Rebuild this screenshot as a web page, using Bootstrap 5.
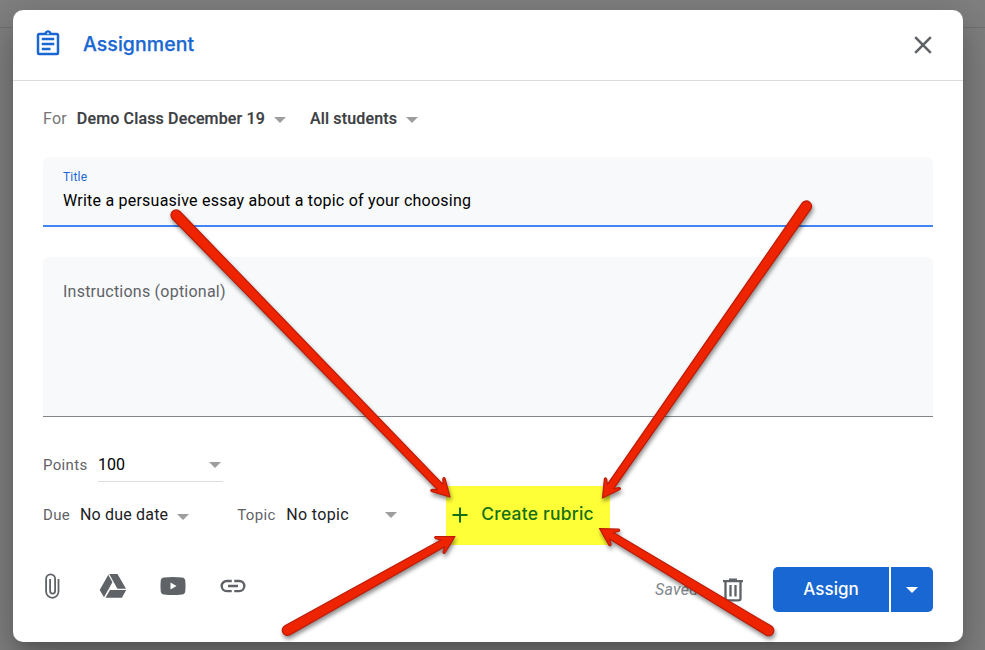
<!DOCTYPE html>
<html lang="en">
<head>
<meta charset="utf-8">
<meta name="viewport" content="width=device-width, initial-scale=1">
<title>Assignment</title>
<link href="https://cdn.jsdelivr.net/npm/bootstrap@5.3.0/dist/css/bootstrap.min.css" rel="stylesheet">
<style>
body{background:#808080;font-family:Roboto,"Liberation Sans",sans-serif;font-size:16px;line-height:20px;color:#202124;height:650px}
.topline{height:28px;border-bottom:1px solid #727272}
.dialog{width:950px;height:632px;margin:-18px 0 0 13px;border-radius:10px;box-shadow:0 11px 15px -7px rgba(0,0,0,.2),0 24px 38px 3px rgba(0,0,0,.14),0 9px 46px 8px rgba(0,0,0,.12)}
.dialog-head{height:71px;border-bottom:1px solid #dadce0;padding:0 30px 2px 20px}
.dialog-title{font-family:Inter,sans-serif;font-size:19.5px;font-weight:500;color:#1967d2;margin:0 0 0 20px;line-height:28px;letter-spacing:.05px;-webkit-text-stroke:.25px #1967d2}
.dialog-main{padding:0 30px}
.for-row{height:76px;color:#757575}
.for-row strong{font-weight:500;color:#3c4043;letter-spacing:.15px;-webkit-text-stroke:.2px #3c4043}
.caret{width:0;height:0;border:6px solid transparent;border-top-color:#9e9e9e;border-bottom:0;flex:none}
.field{background:#f8f9fa;border-radius:6px 6px 0 0;padding-left:20px;color:#000;letter-spacing:.23px}
.field-title{height:70px;border-bottom:2px solid #4285f4;padding-top:10px}
.field-title label{font-size:12px;color:#1967d2;display:block;line-height:20px;letter-spacing:.2px}
.field-title span{display:block;line-height:20px;margin-top:4px}
.field-text{height:160px;margin-top:30px;border-bottom:1px solid #80868b;padding-top:25px;color:#5f6368}
.points-row{height:48px;margin-top:24px}
.muted-label{font-size:15px;color:#5f6368;letter-spacing:.35px}
.points-input{width:125px;height:41px;border-bottom:1px solid #dadce0;color:#000;padding:7px 2px 0 0}
.options-row{height:60px;margin-top:-4px}
.rubric{width:164px;height:59px;background:#ffff38;color:#137013;font-family:Inter,sans-serif;font-size:17.4px;font-weight:500}
.tools-row{height:46px;margin-top:21px;color:#5f6368}
.saved{font-style:italic;color:#80868b}
.btn-assign,.btn-more{background:#1967d2;color:#fff;height:45px;border:0;border-radius:5px 0 0 5px;font-family:Inter,sans-serif;font-size:17px;font-weight:500;padding:0}
.btn-assign{width:116px;padding-top:2px}
.btn-more{width:42px;border-radius:0 5px 5px 0;margin-left:2px}
.btn-more .caret{border-top-color:#fff;margin-top:1px}
.t-for{letter-spacing:.2px}
.t-class{margin-left:10px}.c-class{margin-left:9px;margin-top:2px}.t-all{margin-left:24px}.c-all{margin-left:9px;margin-top:2px}
.t-points{width:55px;line-height:48px}.t-due{width:37px}.t-nodue{letter-spacing:.18px}.c-due{margin-left:9px;margin-top:3px}.t-topic{margin-left:48px;width:49px}.t-notopic{width:99px;letter-spacing:.35px}
.rubric{margin-left:49px;padding-left:6px;letter-spacing:.25px}.plus{margin-right:13px}.t-rubric{padding-bottom:2px}
.i-clip,.i-drive,.i-tube,.i-link{margin-bottom:6px}
.i-drive{margin-left:38px}.i-tube{margin-left:33px}.i-link{margin-left:32px}
.t-saved{margin-left:407px;width:67px;letter-spacing:.25px;padding-top:2px}.i-trash{margin-top:1px}.btn-assign{margin-left:29px}
.arrows{left:0;top:0;pointer-events:none;filter:drop-shadow(1px 3px 2px rgba(0,0,0,.45))}
</style>
<script src="https://cdn.jsdelivr.net/npm/bootstrap@5.3.0/dist/js/bootstrap.bundle.min.js"></script>
</head>
<body class="overflow-hidden position-relative">
<div class="topline"></div>
<main class="dialog bg-white">
  <header class="dialog-head d-flex align-items-center">
    <svg width="30" height="30" viewBox="0 0 24 24" fill="#1967d2"><path d="M7 15h7v2H7zm0-4h10v2H7zm0-4h10v2H7zm12-4h-4.180C14.400 1.840 13.300 1 12 1s-2.400.840-2.820 2H5a2 2 0 0 0-2 2v14a2 2 0 0 0 2 2h14a2 2 0 0 0 2-2V5a2 2 0 0 0-2-2zm-7-.25a.75.75 0 1 1 0 1.500.75.75 0 0 1 0-1.500zM19 19H5V5h14z"/></svg>
    <h1 class="dialog-title">Assignment</h1>
    <svg class="ms-auto" width="20" height="20" viewBox="0 0 20 20" fill="none" stroke="#5f6368" stroke-width="2.600"><path d="M2.200 3.200l15.600 15.600M17.800 3.200L2.200 18.800"/></svg>
  </header>
  <div class="dialog-main">
    <div class="for-row d-flex align-items-center">
      <span class="t-for">For</span><strong class="t-class">Demo Class December 19</strong><i class="caret c-class"></i>
      <strong class="t-all">All students</strong><i class="caret c-all"></i>
    </div>
    <div class="field field-title"><label>Title</label><span>Write a persuasive essay about a topic of your choosing</span></div>
    <div class="field field-text">Instructions (optional)</div>
    <div class="points-row d-flex align-items-start">
      <span class="muted-label t-points">Points</span>
      <div class="points-input d-flex align-items-center justify-content-between"><span>100</span><i class="caret"></i></div>
    </div>
    <div class="options-row d-flex align-items-center">
      <span class="muted-label t-due">Due</span><span class="t-nodue">No due date</span><i class="caret c-due"></i>
      <span class="muted-label t-topic">Topic</span><span class="t-notopic">No topic</span><i class="caret c-topic"></i>
      <div class="rubric d-flex align-items-center">
        <svg class="plus" width="16" height="16" viewBox="0 0 16 16" stroke="#137013" stroke-width="2"><path d="M8 .5v15M.5 8h15"/></svg>
        <span class="t-rubric">Create rubric</span>
      </div>
    </div>
    <div class="tools-row d-flex align-items-center">
      <svg class="i-clip" width="18" height="28" viewBox="0 0 18 28" fill="none" stroke="#5f6368" stroke-width="1.800"><path d="M15.500 7v12.600a6.200 6.200 0 0 1-12.400 0V6.800a4.500 4.500 0 0 1 9 0v12.300a2.500 2.500 0 0 1-5 0V7"/></svg>
      <svg class="i-drive" width="28" height="26" viewBox="0 0 28 26" fill="#5f6368"><path d="M10.200 1h8.300l8.500 14.800h-8.600zM9.300 1.800L13.400 9.200 5 24.200.7 17zM11 17h16.200l-4.300 7.800H6.500z"/></svg>
      <svg class="i-tube" width="26" height="20" viewBox="0 0 26 20"><path fill="#5f6368" d="M4 1.500Q13 .5 22 1.500 25 1.700 25.300 5q.5 5 0 10-.3 3.300-3.300 3.500-9 1-18 0Q1 18.300.7 15q-.5-5 0-10Q1 1.700 4 1.500z"/><path fill="#fff" d="M10.500 6.500v7l6-3.500z"/></svg>
      <svg class="i-link" width="30" height="30" viewBox="0 0 24 24" fill="#5f6368"><path d="M3.900 12c0-1.710 1.390-3.100 3.100-3.100h4V7H7a5 5 0 0 0 0 10h4v-1.900H7A3.100 3.100 0 0 1 3.900 12zM8 13h8v-2H8zm9-6h-4v1.900h4a3.100 3.100 0 0 1 0 6.200h-4V17h4a5 5 0 0 0 0-10z"/></svg>
      <span class="saved t-saved">Saved</span>
      <svg class="i-trash" width="22" height="24" viewBox="0 0 22 24" fill="none" stroke="#5f6368" stroke-width="2.300"><path d="M1 3.200h20M7 1.700h8M3.500 3v17.500q0 1.800 1.800 1.800h11.400q1.800 0 1.800-1.800V3M8.500 7v11.500M13.500 7v11.500"/></svg>
      <button class="btn btn-assign" type="button">Assign</button><button class="btn btn-more d-flex align-items-center justify-content-center" type="button" aria-label="More"><i class="caret"></i></button>
    </div>
  </div>
</main>
<svg class="arrows position-absolute" width="985" height="650" viewBox="0 0 985 650" fill="#ee2400" stroke="#bd1a06" stroke-width="1.200" stroke-linejoin="round">
  <path transform="translate(450 497) rotate(45.830)" d="M0 0L-17 9.500Q-19 9.500-18 7.500L-14 3.800-393 5.200A5.200 5.200 0 0 1-393-5.200L-14-3.800-18-7.500Q-19-9.500-17-9.500z"/>
  <path transform="translate(602.500 498) rotate(124.940)" d="M0 0L-17 9.500Q-19 9.500-18 7.500L-14 3.800-356 5.200A5.200 5.200 0 0 1-356-5.200L-14-3.800-18-7.500Q-19-9.500-17-9.500z"/>
  <path transform="translate(455 536.500) rotate(-29.230)" d="M0 0L-17 9.500Q-19 9.500-18 7.500L-14 3.800-192 5.200A5.200 5.200 0 0 1-192-5.200L-14-3.800-18-7.500Q-19-9.500-17-9.500z"/>
  <path transform="translate(599.500 528.500) rotate(211.110)" d="M0 0L-17 9.500Q-19 9.500-18 7.500L-14 3.800-197.500 5.200A5.200 5.200 0 0 1-197.500-5.200L-14-3.800-18-7.500Q-19-9.500-17-9.500z"/>
</svg>
</body>
</html>
